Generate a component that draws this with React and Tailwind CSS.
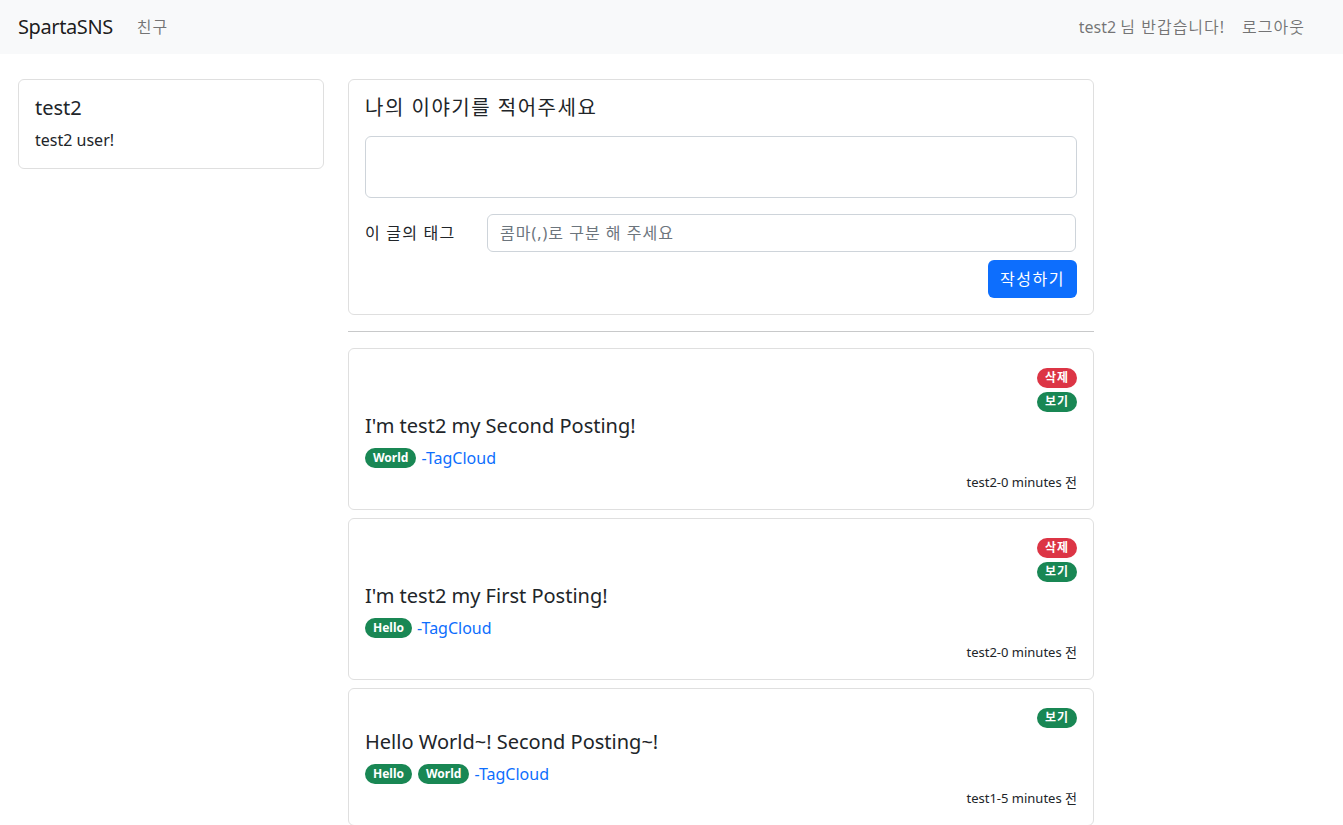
import React from 'react';

const posts = [
  { title: "I'm test2 my Second Posting!", tags: ['World'], author: 'test2-0 minutes 전', mine: true },
  { title: "I'm test2 my First Posting!", tags: ['Hello'], author: 'test2-0 minutes 전', mine: true },
  { title: 'Hello World~! Second Posting~!', tags: ['Hello', 'World'], author: 'test1-5 minutes 전', mine: false },
];

const Badge = ({ color, ko, children }) => (
  <span
    className={`inline-block ${color} ${ko ? 'tracking-[1px]' : ''} text-white text-[12px] font-bold leading-none px-[8px] py-[4px] rounded-full`}
  >
    {children}
  </span>
);

const PostCard = ({ post }) => (
  <div className="bg-white border border-[#dfdfdf] rounded-[6px] px-4 pt-[19px] pb-4">
    {/* 삭제 / 보기 버튼 */}
    <div className="flex flex-col items-end gap-[4px]">
      {post.mine && <Badge color="bg-[#dc3545]" ko>삭제</Badge>}
      <Badge color="bg-[#198754]" ko>보기</Badge>
    </div>
    <h5 className="mt-[2px] text-[20px] leading-[24px] text-[#212529]">{post.title}</h5>
    <div className="mt-2 flex items-center gap-[6px] leading-[24px]">
      {post.tags.map((t) => (
        <Badge key={t} color="bg-[#198754]">{t}</Badge>
      ))}
      <a className="text-[#0d6efd] -ml-[1px]">-TagCloud</a>
    </div>
    <div className="mt-[2px] text-right text-[13px] leading-[21px] text-[#212529]">{post.author}</div>
  </div>
);

export default function App() {
  return (
    <div
      className="min-h-screen bg-white text-[16px] text-[#212529]"
      style={{ fontFamily: '"Noto Sans", "Noto Sans CJK KR", sans-serif' }}
    >
      {/* 상단 네비게이션 */}
      <nav className="h-[54px] bg-[#f8f9fa] flex items-center pl-[18px] pr-[38px]">
        <span className="text-[20px] text-black/90 tracking-[-0.4px]">SpartaSNS</span>
        <a className="ml-[24px] text-black/55 tracking-[1px]">친구</a>
        <div className="ml-auto flex items-center gap-[17px] text-black/55">
          <span>
            test2 <span className="tracking-[1px]">님 반갑습니다!</span>
          </span>
          <a className="tracking-[1px]">로그아웃</a>
        </div>
      </nav>

      <div className="flex gap-[24px] px-[18px] pt-[25px]">
        {/* 프로필 카드 */}
        <div className="w-[306px] shrink-0">
          <div className="border border-[#dfdfdf] rounded-[6px] p-4">
            <h5 className="text-[20px] leading-[24px] mb-2">test2</h5>
            <p className="leading-[24px]">test2 user!</p>
          </div>
        </div>

        {/* 메인 영역 */}
        <div className="w-[746px] shrink-0">
          <div className="border border-[#dfdfdf] rounded-[6px] p-4">
            <h5 className="text-[20px] leading-[24px] tracking-[1.5px]">나의 이야기를 적어주세요</h5>
            <textarea className="mt-4 block w-full h-[62px] border border-[#ced4da] rounded-[6px] resize-none" />
            <div className="mt-4 flex items-center">
              <label className="w-[122px] shrink-0 tracking-[1.2px]">이 글의 태그</label>
              <input
                className="flex-1 h-[38px] border border-[#ced4da] rounded-[6px] px-3 tracking-[1px] placeholder:text-[#6c757d] mr-[1px]"
                placeholder="콤마(,)로 구분 해 주세요"
              />
            </div>
            <div className="mt-2 flex justify-end">
              <button className="h-[38px] px-3 bg-[#0d6efd] text-white rounded-[6px] tracking-[1.5px]">작성하기</button>
            </div>
          </div>

          <hr className="my-4 border-t border-[#c8c9ca]" />

          <div className="flex flex-col gap-2">
            {posts.map((p, i) => (
              <PostCard key={i} post={p} />
            ))}
          </div>
        </div>
      </div>
    </div>
  );
}
